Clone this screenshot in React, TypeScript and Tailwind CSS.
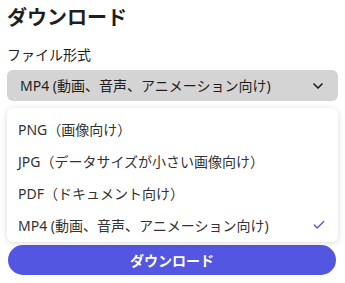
import { Check, ChevronDown } from "lucide-react";

const options = [
  "PNG（画像向け）",
  "JPG（データサイズが小さい画像向け）",
  "PDF（ドキュメント向け）",
  "MP4 (動画、音声、アニメーション向け)",
];

export default function App() {
  const selected = options[3];
  return (
    <div className="w-[345px] h-[283px] bg-white px-[7px] pt-[4px] text-[#1f1f1f] font-['Noto_Sans','Noto_Sans_CJK_JP',sans-serif]">
      <h2 className="text-[20px] font-bold leading-[28px]">ダウンロード</h2>

      <div className="mt-[13px] text-[14px] leading-[20px]">ファイル形式</div>

      <div className="relative mt-[5px]">
        <button className="w-full h-[31px] flex items-center justify-between rounded-[6px] bg-[#d4d4d4] pl-[13px] pr-[12px] text-[14px]">
          <span>{selected}</span>
          <ChevronDown size={16} strokeWidth={2.5} />
        </button>

        {/* dropdown menu */}
        <div className="absolute left-0 right-0 top-[38px] z-10 rounded-[6px] bg-white pt-[5px] pb-[1px] shadow-[0_1px_6px_rgba(0,0,0,0.15)]">
          {options.map((opt) => (
            <div
              key={opt}
              className="flex items-center justify-between h-[32px] pl-[11px] pr-[12px] text-[14px] text-[#333]"
            >
              <span>{opt}</span>
              {opt === selected && (
                <Check size={14} strokeWidth={2.5} className="text-[#5b5bd6]" />
              )}
            </div>
          ))}
        </div>
      </div>

      <button className="mt-[144px] ml-[1px] w-[328px] h-[30px] rounded-full bg-[#5356e0] text-white text-[14px] font-bold">
        ダウンロード
      </button>
    </div>
  );
}
